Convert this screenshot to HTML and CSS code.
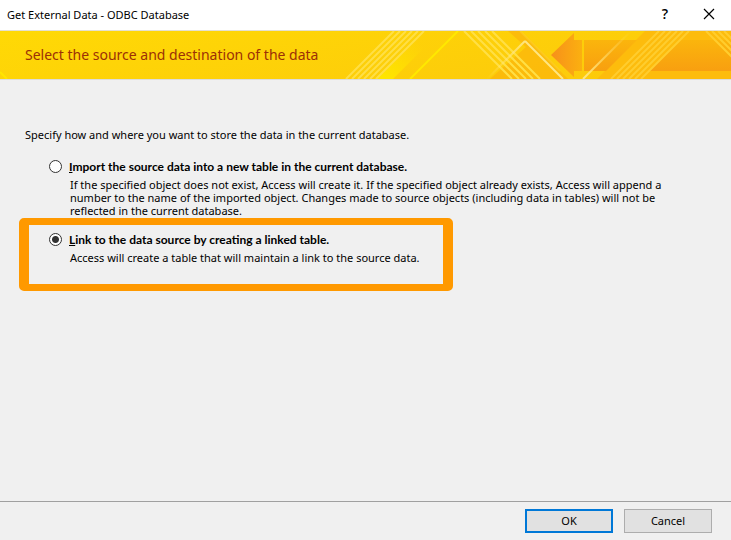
FILE: index.html
```
<!DOCTYPE html>
<html lang="en">
<head>
    <meta charset="UTF-8">
    <title>Get External Data - ODBC Database</title>
    <link rel="stylesheet" href="styles.css">
</head>
<body>
<form class="dialog">
    <header class="title-bar">
        <h1 class="title">Get External Data - ODBC Database</h1>
        <button type="button" class="title-btn" aria-label="Help">?</button>
        <button type="button" class="title-btn" aria-label="Close">
            <svg width="12" height="12" viewBox="0 0 12 12"><path d="M1 1L11 11M11 1L1 11" stroke="#000" stroke-width="1.2"/></svg>
        </button>
    </header>

    <div class="banner">
        <svg class="banner-art" viewBox="0 31 731 48" preserveAspectRatio="xMaxYMid slice" aria-hidden="true">
            <defs>
                <linearGradient id="glow" x1="0" y1="1" x2="1" y2="0">
                    <stop offset="0.1" stop-color="#ffe500"/>
                    <stop offset="0.7" stop-color="#ffe500" stop-opacity="0"/>
                </linearGradient>
                <linearGradient id="head" x1="0" y1="0" x2="1" y2="0">
                    <stop offset="0" stop-color="#f7901a"/>
                    <stop offset="1" stop-color="#fbb010"/>
                </linearGradient>
                <linearGradient id="shaft" x1="0" y1="0" x2="0" y2="1">
                    <stop offset="0" stop-color="#fbb50c"/>
                    <stop offset="1" stop-color="#f89f10"/>
                </linearGradient>
                <linearGradient id="rise" gradientUnits="userSpaceOnUse" x1="487" y1="79" x2="525" y2="41">
                    <stop offset="0" stop-color="#ffe680" stop-opacity="0"/>
                    <stop offset="1" stop-color="#ffe680"/>
                </linearGradient>
                <linearGradient id="ray" gradientUnits="userSpaceOnUse" x1="583" y1="79" x2="631" y2="31">
                    <stop offset="0" stop-color="#ffe680"/>
                    <stop offset="1" stop-color="#ffe680" stop-opacity="0"/>
                </linearGradient>
            </defs>
            <path d="M0 72L7 79" stroke="#ffe500" stroke-width="2"/>
            <path d="M375 79L423 31H441L393 79Z" fill="url(#glow)"/>
            <path d="M410 79L458 31" stroke="#ffe800" stroke-width="2"/>

            <!-- orange bands -->
            <path d="M508 31H520L568 79H490L526 47Z" fill="#fbb50c" opacity=".75"/>
            <path d="M645 31H731V79H597Z" fill="#fdbc0c"/>

            <!-- arrow -->
            <path d="M584 40H637L606 71H584Z" fill="url(#shaft)"/>
            <path d="M680 40H731V71H649Z" fill="url(#shaft)"/>
            <path d="M551 55L574 33V40H582V71H574V77Z" fill="url(#head)"/>

            <!-- thin stripes -->
            <g stroke="#ffdf45" stroke-width="2">
                <path d="M346 79l48-48M352 79l48-48M358 79l48-48M364 79l48-48M370 79l48-48M376 79l48-48"/>
                <path d="M464 31l48 48M471 31l48 48M478 31l48 48M485 31l48 48M492 31l48 48"/>
            </g>
            <g stroke="#ffcd2e" stroke-width="2">
                <path d="M611 79l48-48M617 79l48-48M623 79l48-48M629 79l48-48M635 79l48-48M641 79l48-48"/>
                <path d="M706 31l48 48M712 31l48 48M718 31l48 48M724 31l48 48"/>
                <path d="M520 31l40 40" stroke-opacity=".5"/>
            </g>
            <path d="M487 79L525 41" stroke="url(#rise)" stroke-width="2"/>
            <path d="M525 41L563 79" stroke="#ffe680" stroke-width="2"/>
            <path d="M583 79L631 31" stroke="url(#ray)" stroke-width="2"/>
        </svg>
        <h2 class="banner-text">Select the source and destination of the data</h2>
    </div>

    <main class="content">
        <p class="intro" id="intro">Specify how and where you want to store the data in the current database.</p>
        <div class="options" role="radiogroup" aria-labelledby="intro">
            <div class="option">
                <input type="radio" name="mode" id="import" class="radio">
                <label for="import" class="option-title"><u>I</u>mport the source data into a new table in the current database.</label>
                <p class="option-text">If the specified object does not exist, Access will create it. If the specified object already exists, Access will append a number to the name of the imported object. Changes made to source objects (including data in tables) will not be reflected in the current database.</p>
            </div>
            <div class="option option-marked">
                <input type="radio" name="mode" id="link" class="radio" checked>
                <label for="link" class="option-title"><u>L</u>ink to the data source by creating a linked table.</label>
                <p class="option-text">Access will create a table that will maintain a link to the source data.</p>
            </div>
        </div>
    </main>

    <footer class="footer">
        <button type="submit" class="btn btn-default">OK</button>
        <button type="button" class="btn">Cancel</button>
    </footer>
</form>
</body>
</html>
```
FILE: styles.css
```
* {
    box-sizing: border-box;
}
body {
    margin: 0;
    background: #f0f0f0;
    color: #000;
    font: 11px/13px "Noto Sans", "Open Sans", sans-serif;
}
h1, h2, p {
    margin: 0;
    font-weight: normal;
}

.dialog {
    display: flex;
    flex-direction: column;
    min-height: 100vh;
}

/* title bar */
.title-bar {
    display: flex;
    align-items: center;
    height: 30px;
    padding: 0 0 2px 7px;
    background: #fff;
}
.title {
    flex: 1;
    font-size: 11px;
}
.title-btn {
    display: flex;
    align-items: center;
    justify-content: center;
    width: 44px;
    height: 28px;
    padding: 0;
    border: 0;
    background: none;
    color: #000;
    font: 600 14px/20px "Open Sans", sans-serif;
}

/* yellow banner */
.banner {
    position: relative;
    display: flex;
    align-items: center;
    height: 50px;
    padding-left: 25px;
    border-top: 1px solid #e4e0d0;
    border-bottom: 1px solid #dcdcdc;
    background: linear-gradient(170deg, #ffd905, #fcc80c);
}
.banner-art {
    position: absolute;
    top: 0;
    left: 0;
    width: 100%;
    height: 100%;
}
.banner-text {
    position: relative;
    color: #9c3006;
    font-size: 14px;
    line-height: 20px;
}

/* options */
.content {
    flex: 1;
    padding: 48px 19px 0;
}
.intro {
    padding-left: 6px;
}
.options {
    padding-top: 19px;
}
.option {
    display: grid;
    grid-template-columns: 14px 1fr;
    column-gap: 6px;
    row-gap: 5px;
    align-items: center;
    max-width: 650px;
    padding-left: 30px;
}
.option-marked {
    width: 434px;
    max-width: 100%;
    margin-top: 1px;
    padding: 8px 0 20px 20px;
    border: 7px solid #ff9900;
    border-width: 7px 10px;
    border-radius: 5px;
}
.radio {
    appearance: none;
    width: 13px;
    height: 13px;
    margin: 0;
    border: 1px solid #333;
    border-radius: 50%;
    background: #fff;
}
.radio:checked {
    background: radial-gradient(circle, #333 3px, #fff 4px);
}
.option-title {
    font-family: Lato, "Noto Sans", sans-serif;
    font-size: 12px;
    font-weight: bold;
}
.option-text {
    grid-column: 2;
    padding-left: 1px;
}

/* buttons */
.footer {
    display: flex;
    justify-content: flex-end;
    gap: 11px;
    padding: 7px 19px 7px;
    border-top: 1px solid #a0a0a0;
}
.btn {
    width: 88px;
    height: 24px;
    padding: 0 0 2px;
    border: 1px solid #adadad;
    background: #e1e1e1;
    color: #000;
    font: inherit;
}
.btn-default {
    border: 2px solid #0078d7;
}
```
